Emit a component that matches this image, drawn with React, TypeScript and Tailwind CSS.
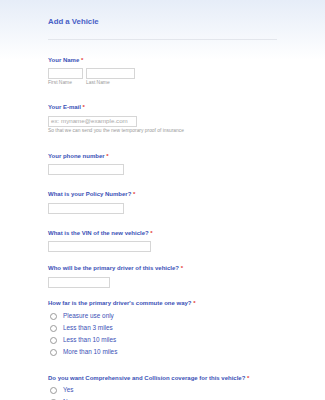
import React from 'react';

const font = { fontFamily: '"Liberation Sans", Arial, sans-serif' };

const Label: React.FC<{ text: string; className?: string }> = ({ text, className = '' }) => (
  <div className={`h-[10px] leading-[10px] text-[6px] font-bold text-[#3b51b6] whitespace-nowrap ${className}`}>
    {text} <span className="text-[#e53935]">*</span>
  </div>
);

const Box: React.FC<{ w: string; className?: string; placeholder?: string }> = ({ w, className = '', placeholder }) => (
  <div className={`h-[11px] border border-[#d6d6d6] bg-white ${w} ${className} flex items-center px-[2px]`}>
    {placeholder && <span className="text-[6.2px] text-[#a9a9a9] leading-none whitespace-nowrap">{placeholder}</span>}
  </div>
);

const Radio: React.FC<{ text: string }> = ({ text }) => (
  <div className="h-[12px] flex items-center">
    <span className="ml-[2px] w-[7px] h-[7px] rounded-full border border-[#9a9a9a] bg-white" />
    <span className="ml-[6px] text-[6.4px] text-[#3b51b6] leading-none">{text}</span>
  </div>
);

export default function App() {
  return (
    <div className="relative w-[325px] h-[400px] overflow-hidden bg-white" style={font}>
      <div className="absolute inset-x-0 top-0 h-[60px] bg-gradient-to-b from-[#e6edf8] to-white" />
      <div className="relative px-[48px] pt-[17px]">
        <div className="h-[10px] leading-[10px] text-[7.8px] font-bold text-[#4760c6]">Add a Vehicle</div>
        <div className="mt-[12px] h-px w-[229px] bg-[#e3e6ec]" />

        {/* Name */}
        <Label text="Your Name" className="mt-[15px]" />
        <div className="mt-[3px] flex gap-[3px]">
          <div>
            <Box w="w-[35px]" />
            <div className="h-[6px] leading-[6px] mt-px text-[4.9px] text-[#9a9a9a]">First Name</div>
          </div>
          <div>
            <Box w="w-[49px]" />
            <div className="h-[6px] leading-[6px] mt-px text-[4.9px] text-[#9a9a9a]">Last Name</div>
          </div>
        </div>

        {/* Email */}
        <Label text="Your E-mail" className="mt-[16px]" />
        <Box w="w-[89px]" className="mt-[4px]" placeholder="ex: myname@example.com" />
        <div className="h-[6px] leading-[6px] mt-px text-[4.9px] text-[#9a9a9a] whitespace-nowrap">
          So that we can send you the new temporary proof of insurance
        </div>

        <Label text="Your phone number" className="mt-[17px]" />
        <Box w="w-[76px]" className="mt-[3px]" />

        <Label text="What is your Policy Number?" className="mt-[14px]" />
        <Box w="w-[76px]" className="mt-[4px]" />

        <Label text="What is the VIN of the new vehicle?" className="mt-[14px]" />
        <Box w="w-[103px]" className="mt-[3px]" />

        <Label text="Who will be the primary driver of this vehicle?" className="mt-[11px]" />
        <Box w="w-[62px]" className="mt-[4px]" />

        <Label text="How far is the primary driver's commute one way?" className="mt-[10px]" />
        <div className="mt-[2px]">
          <Radio text="Pleasure use only" />
          <Radio text="Less than 3 miles" />
          <Radio text="Less than 10 miles" />
          <Radio text="More than 10 miles" />
        </div>

        <Label text="Do you want Comprehensive and Collision coverage for this vehicle?" className="mt-[15px]" />
        <div className="mt-[1px]">
          <Radio text="Yes" />
          <Radio text="No" />
        </div>
      </div>
    </div>
  );
}
